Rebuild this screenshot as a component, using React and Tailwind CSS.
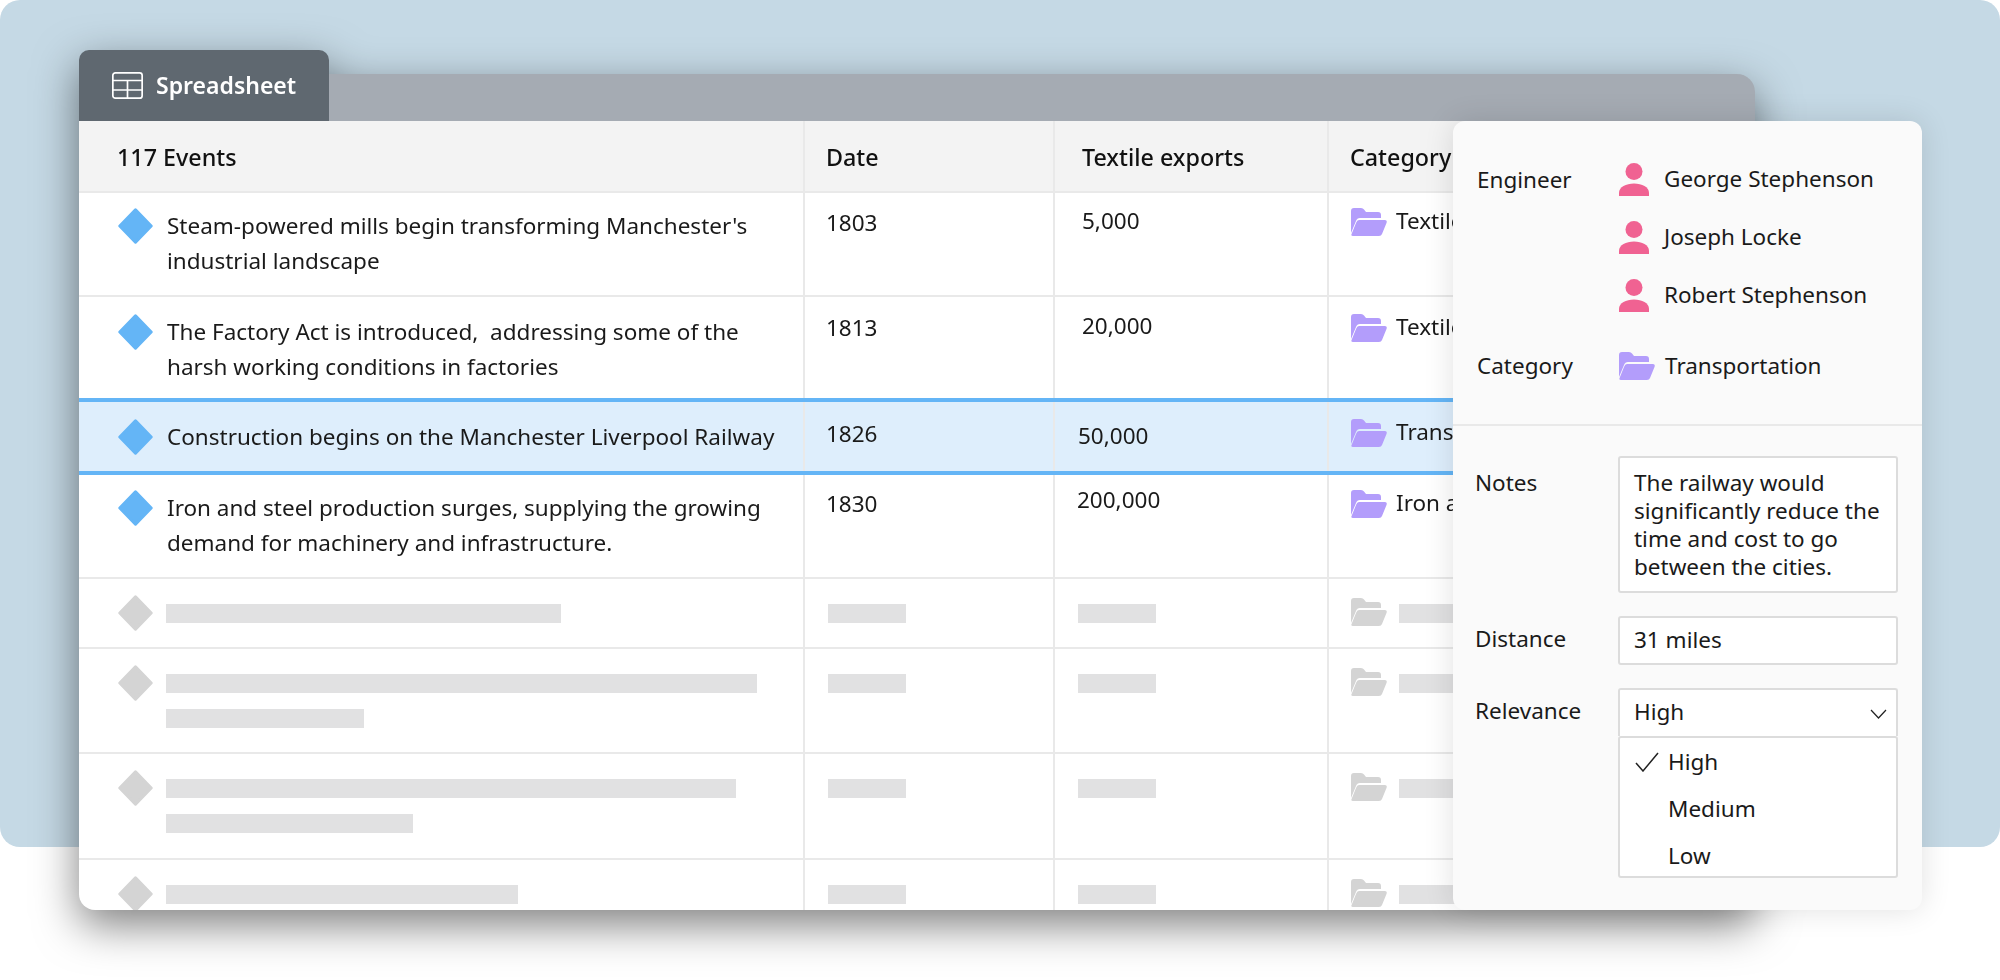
const FONT = "font-['Noto_Sans',sans-serif]";

function Diamond({ color }) {
  return (
    <svg width="35" height="36" viewBox="0 0 35 36" className="shrink-0">
      <path d="M17.5 1.8 L33.2 18 L17.5 34.2 L1.8 18 Z" fill={color} stroke={color} strokeWidth="3" strokeLinejoin="round" />
    </svg>
  );
}

function Folder({ color }) {
  return (
    <svg width="36" height="28" viewBox="0 0 36 28" className="shrink-0">
      <path d="M0 3 Q0 0 3 0 H10 Q12 0 13 1.5 L15 4 H27 Q30 4 30 7 V10 H9 Q6 10 5 13 L0 25 Z" fill={color} />
      <path d="M8 12 H34 Q36.5 12 35.5 15 L31 26 Q30.3 28 28 28 H2 Q-0.3 28 0.6 26 L5 15 Q6 12 8 12 Z" fill={color} />
    </svg>
  );
}

function Person() {
  return (
    <svg width="30" height="33" viewBox="0 0 30 33" className="shrink-0">
      <circle cx="15" cy="8.5" r="8.5" fill="#f06292" />
      <path d="M0 33 V30 C0 24 7 20.5 15 20.5 C23 20.5 30 24 30 30 V33 Z" fill="#f06292" />
    </svg>
  );
}

function TableIcon() {
  return (
    <svg width="31" height="27" viewBox="0 0 31 27" fill="none" stroke="#fff" strokeWidth="1.7" className="shrink-0">
      <rect x="0.85" y="0.85" width="29.3" height="25.3" rx="2.5" />
      <path d="M1 8.5 H30 M1 18 H30 M15.5 8.5 V26" />
    </svg>
  );
}

const rows = [
  {
    h: "h-[104px] border-b-2 border-[#e9e9e9]", pad: "pt-[15px]",
    lines: ["Steam-powered mills begin transforming Manchester's", "industrial landscape"],
    date: "1803", dateTop: "pt-[12px]", exp: "5,000", expLeft: "pl-[27px]", expTop: "pt-[10px]", cat: "Textile", catTop: "pt-[15px]",
  },
  {
    h: "h-[101px]", pad: "pt-[17px]",
    lines: ["The Factory Act is introduced,  addressing some of the", "harsh working conditions in factories"],
    date: "1813", dateTop: "pt-[13px]", exp: "20,000", expLeft: "pl-[27px]", expTop: "pt-[11px]", cat: "Textile", catTop: "pt-[17px]",
  },
  {
    h: "h-[77px] bg-[#deeefc] border-y-4 border-[#64b5f6]", pad: "pt-[17px]",
    lines: ["Construction begins on the Manchester Liverpool Railway"],
    date: "1826", dateTop: "pt-[14px]", exp: "50,000", expLeft: "pl-[23px]", expTop: "pt-[16px]", cat: "Transportation", catTop: "pt-[17px]",
  },
  {
    h: "h-[104px] border-b-2 border-[#e9e9e9]", pad: "pt-[15px]",
    lines: ["Iron and steel production surges, supplying the growing", "demand for machinery and infrastructure."],
    date: "1830", dateTop: "pt-[11px]", exp: "200,000", expLeft: "pl-[22px]", expTop: "pt-[7px]", cat: "Iron and Steel", catTop: "pt-[15px]",
  },
];

const skeletons = [
  { h: "h-[70px]", bars: ["w-[395px]"] },
  { h: "h-[105px]", bars: ["w-[591px]", "w-[198px]"] },
  { h: "h-[106px]", bars: ["w-[570px]", "w-[247px]"] },
  { h: "h-[50px]", bars: ["w-[352px]"] },
];

function Row({ row }) {
  return (
    <div className={`flex text-[22.5px] leading-[35px] text-[#1a1a1a] ${row.h}`}>
      <div className={`flex w-[726px] gap-[14px] border-r-2 border-[#e9e9e9] pl-[39px] ${row.pad}`}>
        <Diamond color="#64b5f6" />
        <div>
          {row.lines.map((l) => (
            <div key={l} className="whitespace-pre">{l}</div>
          ))}
        </div>
      </div>
      <div className={`w-[250px] border-r-2 border-[#e9e9e9] pl-[21px] ${row.dateTop}`}>{row.date}</div>
      <div className={`w-[274px] border-r-2 border-[#e9e9e9] ${row.expLeft} ${row.expTop}`}>{row.exp}</div>
      <div className={`flex flex-1 gap-[9px] pl-[22px] ${row.catTop}`}>
        <Folder color="#b39dfb" />
        <span className="-mt-[5px]">{row.cat}</span>
      </div>
    </div>
  );
}

function SkeletonRow({ row }) {
  return (
    <div className={`flex ${row.h} border-b-2 border-[#e9e9e9] last:border-b-0`}>
      <div className="flex w-[726px] gap-[13px] border-r-2 border-[#e9e9e9] pl-[39px] pt-[16px]">
        <Diamond color="#d4d4d4" />
        <div className="flex flex-col gap-4 pt-[9px]">
          {row.bars.map((b) => (
            <div key={b} className={`h-[19px] bg-[#e1e1e2] ${b}`} />
          ))}
        </div>
      </div>
      <div className="w-[250px] border-r-2 border-[#e9e9e9] pl-[23px] pt-[25px]">
        <div className="h-[19px] w-[78px] bg-[#e1e1e2]" />
      </div>
      <div className="w-[274px] border-r-2 border-[#e9e9e9] pl-[23px] pt-[25px]">
        <div className="h-[19px] w-[78px] bg-[#e1e1e2]" />
      </div>
      <div className="flex flex-1 gap-[12px] pl-[22px] pt-[19px]">
        <Folder color="#d4d4d4" />
        <div className="mt-[6px] h-[19px] w-[120px] bg-[#e1e1e2]" />
      </div>
    </div>
  );
}

function Panel() {
  return (
    <div className="absolute left-[1453px] top-[121px] h-[789px] w-[469px] rounded-[12px] bg-[#fafafa] text-[22.5px] text-[#1a1a1a] shadow-[0_0_30px_rgba(0,0,0,0.12)]">
      <div className="h-[305px] border-b-2 border-[#e9e9e9] pl-[24px] pt-[42px]">
        <div className="flex">
          <div className="w-[142px] leading-[33px]">Engineer</div>
          <div className="flex flex-col gap-[26px]">
            {["George Stephenson", "Joseph Locke", "Robert Stephenson"].map((n) => (
              <div key={n} className="flex h-[32px] items-center gap-[15px]">
                <Person />
                <span className="-mt-[1px] leading-[32px]">{n}</span>
              </div>
            ))}
          </div>
        </div>
        <div className="mt-[38px] flex">
          <div className="w-[142px] leading-[33px]">Category</div>
          <div className="flex items-center gap-[10px]">
            <Folder color="#b39dfb" />
            <span className="-mt-[1px] leading-[35px]">Transportation</span>
          </div>
        </div>
      </div>
      <div className="pl-[22px] pr-[24px] pt-[30px]">
        <div className="flex">
          <div className="w-[143px] leading-[54px]">Notes</div>
          <div className="h-[137px] w-[280px] rounded-[3px] border-2 border-[#dcdcdc] bg-white px-[14px] pt-[11px] leading-[28px]">
            The railway would significantly reduce the time and cost to go between the cities.
          </div>
        </div>
        <div className="mt-[23px] flex">
          <div className="w-[143px] leading-[45px]">Distance</div>
          <div className="h-[49px] w-[280px] rounded-[3px] border-2 border-[#dcdcdc] bg-white px-[14px] leading-[44px]">31 miles</div>
        </div>
        <div className="mt-[23px] flex">
          <div className="w-[143px] leading-[45px]">Relevance</div>
          <div className="w-[280px]">
            <div className="flex h-[48px] items-center justify-between rounded-t-[3px] border-2 border-b-0 border-[#dcdcdc] bg-white pl-[14px] pr-[9px]">
              <span className="-mt-[3px]">High</span>
              <svg width="17" height="10" viewBox="0 0 17 10" fill="none" stroke="#222" strokeWidth="1.2" className="mt-[2px]">
                <path d="M1 1 L8.5 9 L16 1" />
              </svg>
            </div>
            <div className="h-[142px] rounded-[3px] border-2 border-[#dcdcdc] bg-white">
              <div className="flex h-[47px] items-center pl-[15px]">
                <svg width="24" height="20" viewBox="0 0 24 20" fill="none" stroke="#222" strokeWidth="1.5" className="shrink-0">
                  <path d="M1 11 L8 19 L23 1" />
                </svg>
                <span className="pl-[9px]">High</span>
              </div>
              <div className="flex h-[47px] items-center pl-[48px]">Medium</div>
              <div className="flex h-[47px] items-center pl-[48px]">Low</div>
            </div>
          </div>
        </div>
      </div>
    </div>
  );
}

export default function App() {
  return (
    <div className={`relative h-[980px] w-[2000px] overflow-hidden bg-white ${FONT}`}>
      <div className="absolute inset-x-0 top-0 h-[847px] rounded-[20px] bg-[#c5d9e5]" />
      <div className="relative ml-[79px] w-[1676px] pt-[50px] drop-shadow-[0_15px_22px_rgba(0,0,0,0.5)]">
        <div className="flex h-[71px]">
          <div className="flex w-[250px] items-center gap-[13px] rounded-t-[10px] bg-[#5f6870] pl-[33px] text-[23px] font-semibold text-white">
            <TableIcon />
            Spreadsheet
          </div>
          <div className="mt-[24px] flex-1 rounded-tr-[18px] bg-[#a5abb3]" />
        </div>
        <div className="h-[789px] overflow-hidden rounded-b-[16px] bg-white">
          <div className="flex h-[72px] border-b-2 border-[#e9e9e9] bg-[#f3f3f3] text-[23.3px] font-medium leading-[72px] text-[#111]">
            <div className="w-[726px] border-r-2 border-[#e9e9e9] pl-[38px]">117 Events</div>
            <div className="w-[250px] border-r-2 border-[#e9e9e9] pl-[21px]">Date</div>
            <div className="w-[274px] border-r-2 border-[#e9e9e9] pl-[27px]">Textile exports</div>
            <div className="flex-1 pl-[21px]">Category</div>
          </div>
          {rows.map((r) => (
            <Row key={r.date} row={r} />
          ))}
          {skeletons.map((r) => (
            <SkeletonRow key={r.bars[0]} row={r} />
          ))}
        </div>
      </div>
      <Panel />
    </div>
  );
}
